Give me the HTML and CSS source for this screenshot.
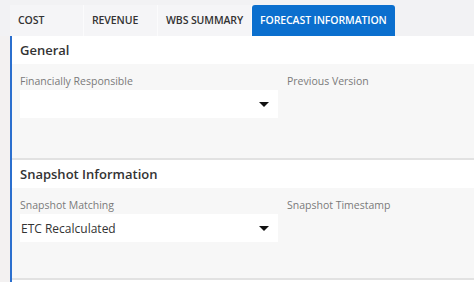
FILE: index.html
```html
<!DOCTYPE html>
<html lang="en">
<head>
  <meta charset="UTF-8">
  <meta name="viewport" content="width=device-width, initial-scale=1.0">
  <title>Forecast information</title>
  <link rel="stylesheet" href="styles.css">
</head>
<body>
  <div class="tabs">
    <div class="tab">COST</div>
    <div class="tab">REVENUE</div>
    <div class="tab">WBS SUMMARY</div>
    <div class="tab active">FORECAST INFORMATION</div>
  </div>

  <div class="panel">
    <div class="section">
      <div class="section-title">General</div>
      <div class="section-body">
        <div class="field">
          <label>Financially Responsible</label>
          <div class="select"><span></span><i class="caret"></i></div>
        </div>
        <div class="field">
          <label>Previous Version</label>
        </div>
      </div>
    </div>

    <div class="section">
      <div class="section-title">Snapshot Information</div>
      <div class="section-body short">
        <div class="field">
          <label>Snapshot Matching</label>
          <div class="select"><span>ETC Recalculated</span><i class="caret"></i></div>
        </div>
        <div class="field">
          <label>Snapshot Timestamp</label>
        </div>
      </div>
    </div>

    <div class="section"></div>
  </div>
</body>
</html>
```

FILE: styles.css
```css
body {
  margin: 0;
  padding: 0;
  background-color: #f3f1f1;
  font-family: "Open Sans", "Liberation Sans", sans-serif;
  color: #333;
}

.tabs {
  display: flex;
  height: 36px;
  padding: 5px 0 0 10px;
  box-sizing: border-box;
  background-color: #f2f2f4;
}

.tab {
  min-width: 74px;
  padding: 0 8px;
  box-sizing: border-box;
  font-size: 10.5px;
  font-weight: 600;
  line-height: 31px;
  letter-spacing: -0.1px;
  color: #333;
  background-color: #f5f5f7;
  border-right: 1px solid #fbfbfc;
}

.tab.active {
  background-color: #0b6fce;
  color: white;
  border-right: none;
  border-radius: 3px 3px 0 0;
}

.panel {
  margin-left: 10px;
  border-left: 2px solid #2b6fce;
  height: 246px;
  overflow: hidden;
  background-color: white;
}

.section + .section {
  border-top: 2px solid #e2e2e2;
}

.section-title {
  height: 28px;
  padding-left: 8px;
  font-size: 13px;
  font-weight: 600;
  line-height: 28px;
  color: #333;
}

.section-body {
  display: grid;
  grid-template-columns: 258px 1fr;
  column-gap: 9px;
  padding: 8px 8px 40px;
  background-color: #f7f7f7;
}

.section-body.short {
  padding-bottom: 36px;
}

.field label {
  display: block;
  height: 18px;
  font-size: 10.5px;
  line-height: 18px;
  color: #7a7a7a;
}

.select {
  display: flex;
  align-items: center;
  justify-content: space-between;
  height: 28px;
  padding: 0 9px 0 1px;
  background-color: white;
  font-size: 12px;
  color: #333;
}

.caret {
  width: 0;
  height: 0;
  border-left: 5px solid transparent;
  border-right: 5px solid transparent;
  border-top: 5px solid #111;
}
```
